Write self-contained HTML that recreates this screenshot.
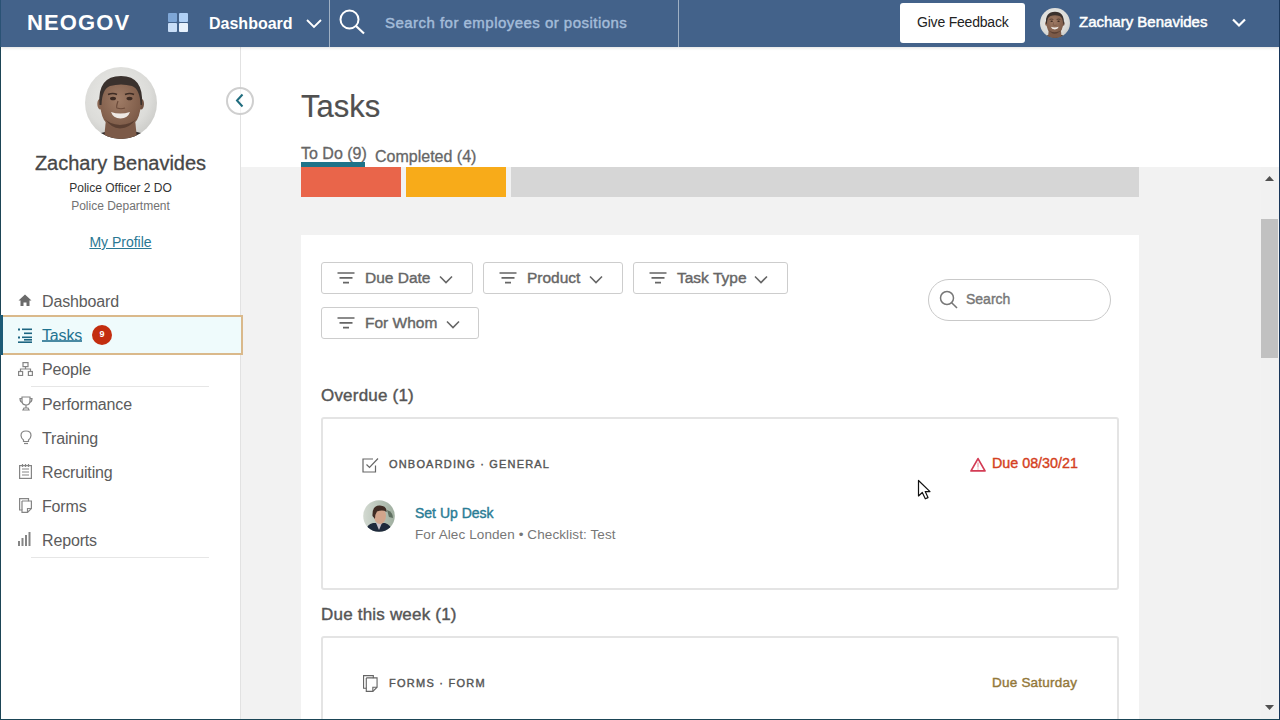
<!DOCTYPE html>
<html><head><meta charset="utf-8">
<style>
*{margin:0;padding:0;box-sizing:border-box}
html,body{width:1280px;height:720px;overflow:hidden;background:#fff;font-family:"Liberation Sans",sans-serif}
.a{position:absolute;white-space:nowrap}
#hdr{position:absolute;z-index:6;left:0;top:0;width:1280px;height:47px;background:#43628a;box-shadow:0 1px 3px rgba(0,0,0,0.12)}
#side{position:absolute;z-index:5;left:0;top:47px;width:241px;height:673px;background:#fff;border-right:1px solid #e2e2e2}
#gray{position:absolute;left:241px;top:167px;width:1039px;height:553px;background:#f2f2f2}
#card{position:absolute;left:301px;top:235px;width:838px;height:485px;background:#fff}
.nav{position:absolute;left:42px;font-size:16px;color:#5c5c5c;letter-spacing:-0.15px}
.ico{position:absolute}
.fbtn{position:absolute;height:32px;border:1px solid #cdcdcd;border-radius:3px;background:#fff}
.fbtn span{position:absolute;top:6px;font-size:15.5px;color:#666;-webkit-text-stroke:0.4px #666}
.sb{-webkit-text-stroke-width:0.4px}
.tcard{position:absolute;left:321px;width:798px;border:2px solid #e4e4e4;border-radius:3px;background:#fff}
</style></head><body>
<svg width="0" height="0" style="position:absolute">
<defs>
<radialGradient id="gbg" cx="45%" cy="40%" r="65%"><stop offset="0" stop-color="#ecece9"/><stop offset="0.7" stop-color="#dcdcd9"/><stop offset="1" stop-color="#c9c9c6"/></radialGradient>
<radialGradient id="gsk" cx="45%" cy="40%" r="60%"><stop offset="0" stop-color="#a07c66"/><stop offset="1" stop-color="#7c5a47"/></radialGradient>
<symbol id="zach" viewBox="0 0 72 72">
  <clipPath id="cav"><circle cx="36" cy="36" r="36"/></clipPath>
  <g clip-path="url(#cav)">
    <rect width="72" height="72" fill="url(#gbg)"/>
    <path d="M10 72 L16 66 L24 64 L48 64 L56 66 L62 72 Z" fill="#2e2a2a"/>
    <path d="M19 72 L21 52 L50 52 L52 72 Z" fill="#7c5a48"/>
    <ellipse cx="15.5" cy="37" rx="3.2" ry="5.5" fill="#8a6652"/>
    <ellipse cx="56" cy="37" rx="3" ry="5.5" fill="#6f5040"/>
    <path d="M15 32 Q15 13 36 13 Q57 13 56 32 Q56 46 52 53 Q45 62 35 62 Q25 62 19 53 Q15 46 15 32 Z" fill="url(#gsk)"/>
    <path d="M20 52 Q26 61 35 61.5 Q45 61 51 52 Q47 57 35 58 Q24 57 20 52 Z" fill="#5a3f32"/>
    <path d="M14.5 38 Q12 9 36 9 Q59 9 57 38 L55.5 38 Q55 22 47 19 Q36 16 25 19 Q17 22 16.5 38 Z" fill="#3a312d"/>
    <path d="M23 27.5 Q28 25.5 32 27.5 M40 27.5 Q45 25.5 49 27.5" stroke="#3e2c24" stroke-width="1.6" fill="none"/>
    <ellipse cx="28" cy="31.5" rx="3" ry="1.8" fill="#3c2a22"/>
    <ellipse cx="44.5" cy="31.5" rx="3" ry="1.8" fill="#3c2a22"/>
    <path d="M33 34 Q31 40 32 41 Q36 42.5 40 41" stroke="#6b4a3a" stroke-width="1.2" fill="none"/>
    <path d="M26 45 Q35 48 45 45 Q43 51 35.5 51.5 Q28 51 26 45 Z" fill="#efe9e4"/>
  </g>
</symbol>
</defs></svg>
<div id="hdr">
  <div class="a" style="left:27px;top:10px;font-size:22px;font-weight:bold;color:#fff;letter-spacing:1.1px">NEOGOV</div>
  <div class="ico" style="left:168px;top:13px;width:9px;height:9px;background:#7ea6d6;border-radius:1px"></div>
  <div class="ico" style="left:179px;top:13px;width:9px;height:9px;background:#afd0f6;border-radius:1px"></div>
  <div class="ico" style="left:168px;top:23px;width:9px;height:9px;background:#c9def7;border-radius:1px"></div>
  <div class="ico" style="left:179px;top:23px;width:9px;height:9px;background:#e8f2fd;border-radius:1px"></div>
  <div class="a" style="left:209px;top:15px;font-size:16px;font-weight:bold;color:#fff">Dashboard</div>
  <svg class="ico" style="left:305px;top:17px" width="18" height="14" viewBox="0 0 18 14"><path d="M2 3 L9 10 L16 3" stroke="#fff" stroke-width="1.8" fill="none"/></svg>
  <div class="ico" style="left:329px;top:0;width:1px;height:47px;background:#9fb0c4"></div>
  <svg class="ico" style="left:338px;top:8px" width="28" height="28" viewBox="0 0 28 28"><circle cx="11.5" cy="11.5" r="9" stroke="#fff" stroke-width="2" fill="none"/><path d="M18 18 L26 25.5" stroke="#fff" stroke-width="2.2"/></svg>
  <div class="a" style="left:385px;top:14px;font-size:15px;letter-spacing:0.47px;color:#a3bcd9;-webkit-text-stroke:0.45px #a3bcd9">Search for employees or positions</div>
  <div class="ico" style="left:678px;top:0;width:1px;height:47px;background:#9fb0c4"></div>
  <div class="ico" style="left:900px;top:3px;width:125px;height:40px;background:#fff;border-radius:3px"></div>
  <div class="a" style="left:917px;top:14px;font-size:14px;color:#222;letter-spacing:-0.2px">Give Feedback</div>
  <svg class="ico" style="left:1040px;top:8px" width="30" height="30" viewBox="0 0 72 72"><use href="#zach"/></svg>
  <div class="a" style="left:1079px;top:13px;font-size:15px;color:#fff;-webkit-text-stroke:0.5px #fff">Zachary Benavides</div>
  <svg class="ico" style="left:1231px;top:17px" width="16" height="12" viewBox="0 0 16 12"><path d="M2 2.5 L8 8.5 L14 2.5" stroke="#fff" stroke-width="2.2" fill="none"/></svg>
</div>

<div id="side">
  <div class="ico" style="left:0;top:0;width:1px;height:673px;background:#1d4556"></div>
  <svg class="ico" style="left:85px;top:20px" width="72" height="72" viewBox="0 0 72 72"><use href="#zach"/></svg>
  <div class="a" style="left:0;width:241px;text-align:center;top:105px;font-size:20px;color:#474747;-webkit-text-stroke:0.3px #474747">Zachary Benavides</div>
  <div class="a" style="left:0;width:241px;text-align:center;top:134px;font-size:12px;color:#333">Police Officer 2 DO</div>
  <div class="a" style="left:0;width:241px;text-align:center;top:152px;font-size:12px;color:#727272">Police Department</div>
  <div class="a" style="left:0;width:241px;text-align:center;top:187px;font-size:14px;color:#2a7893;text-decoration:underline">My Profile</div>
  <div class="ico" style="left:226px;top:40px;width:28px;height:28px;border-radius:50%;border:2px solid #cfcfcf;background:rgba(255,255,255,0.6)"></div>
  <svg class="ico" style="left:226px;top:40px" width="28" height="28" viewBox="0 0 28 28"><path d="M16.5 7.5 L11 13.5 L16.5 19.5" stroke="#1f6c7e" stroke-width="2" fill="none"/></svg>

  <svg class="ico" style="left:18px;top:247px" width="14" height="13" viewBox="0 0 14 13"><path d="M7 0.5 L13.5 6.5 L11.5 6.5 L11.5 12 L8.5 12 L8.5 8.5 L5.5 8.5 L5.5 12 L2.5 12 L2.5 6.5 L0.5 6.5 Z" fill="#6a6a6a"/></svg>
  <div class="nav" style="top:246px">Dashboard</div>

  <div class="ico" style="left:1px;top:268px;width:242px;height:40px;background:#effbfc;border:2px solid #dab98b"></div>
  <div class="ico" style="left:0;top:268px;width:3px;height:40px;background:#1d5b77"></div>
  <svg class="ico" style="left:18px;top:281px" width="15" height="15" viewBox="0 0 15 15"><g fill="#1e6682"><rect x="0" y="0.5" width="2" height="2"/><rect x="4" y="0.5" width="10" height="1.6"/><rect x="6" y="4.5" width="8" height="1.6"/><rect x="0" y="8.5" width="2" height="2"/><rect x="4" y="8.5" width="10" height="1.6"/><rect x="6" y="11" width="8" height="1.6"/><rect x="0" y="13.4" width="14" height="1.6"/></g></svg>
  <div class="nav" style="top:280px;color:#1f7391">Tasks</div><div class="ico" style="left:42px;top:293px;width:40px;height:2px;background:#4a8aa3"></div>
  <div class="ico" style="left:92px;top:278px;width:20px;height:20px;border-radius:50%;background:#c32d0f;color:#fff;font-size:9px;font-weight:bold;text-align:center;line-height:19px">9</div>

  <svg class="ico" style="left:18px;top:315px" width="15" height="14" viewBox="0 0 15 14"><g stroke="#858585" stroke-width="1.2" fill="none"><rect x="5" y="0.6" width="5" height="4"/><path d="M7.5 4.6 V7 M2.5 9.5 V7 H12.5 V9.5"/><rect x="0.6" y="9.5" width="4" height="4"/><rect x="10.4" y="9.5" width="4" height="4"/></g></svg>
  <div class="nav" style="top:314px">People</div>
  <div class="ico" style="left:31px;top:339px;width:178px;height:1px;background:#e6e6e6"></div>

  <svg class="ico" style="left:19px;top:349px" width="14" height="15" viewBox="0 0 14 15"><g stroke="#858585" stroke-width="1.2" fill="none"><path d="M3 1 H11 V5 Q11 9 7 9 Q3 9 3 5 Z"/><path d="M3 2.5 H1 Q1 6 3.5 6.5 M11 2.5 H13 Q13 6 10.5 6.5"/><path d="M7 9 V12 M4 14 H10 L9 12 H5 Z"/></g></svg>
  <div class="nav" style="top:349px">Performance</div>

  <svg class="ico" style="left:20px;top:383px" width="12" height="15" viewBox="0 0 12 15"><g stroke="#858585" stroke-width="1.2" fill="none"><path d="M6 1 Q11 1 11 5.5 Q11 8 8.5 10 V11.5 H3.5 V10 Q1 8 1 5.5 Q1 1 6 1 Z"/><path d="M4 13.5 H8"/></g></svg>
  <div class="nav" style="top:383px">Training</div>

  <svg class="ico" style="left:19px;top:417px" width="13" height="15" viewBox="0 0 13 15"><g stroke="#858585" stroke-width="1.2" fill="none"><rect x="0.6" y="1.6" width="11.8" height="12.8"/><path d="M3 5 H10 M3 8 H10 M3 11 H10 M3.5 0 V3 M6.5 0 V3 M9.5 0 V3"/></g></svg>
  <div class="nav" style="top:417px">Recruiting</div>

  <svg class="ico" style="left:19px;top:451px" width="13" height="15" viewBox="0 0 13 15"><g stroke="#858585" stroke-width="1.2" fill="none"><path d="M0.6 0.6 H9.5 V3 H12.4 V10.5 L8.5 14.4 H3 V12 H0.6 Z"/><path d="M3 3 H9.5 M3 3 V12 M8.5 14.4 V10.5 H12.4"/></g></svg>
  <div class="nav" style="top:451px">Forms</div>

  <svg class="ico" style="left:18px;top:485px" width="14" height="14" viewBox="0 0 14 14"><g fill="#858585"><rect x="0" y="9" width="2" height="5"/><rect x="3.5" y="6" width="2" height="8"/><rect x="7" y="3" width="2" height="11"/><rect x="10.5" y="0" width="2" height="14"/></g></svg>
  <div class="nav" style="top:485px">Reports</div>
  <div class="ico" style="left:31px;top:510px;width:178px;height:1px;background:#e6e6e6"></div>
</div>

<div class="a" style="left:301px;top:89px;font-size:31px;color:#505050;-webkit-text-stroke:0.2px #505050">Tasks</div>
<div class="a" style="left:301px;top:145px;font-size:16px;color:#666;-webkit-text-stroke:0.3px #666">To Do (9)</div>
<div class="a" style="left:375px;top:148px;font-size:16px;color:#666;-webkit-text-stroke:0.3px #666">Completed (4)</div>
<div id="gray"></div>
<div class="ico" style="left:301px;top:162px;width:64px;height:5px;background:#1e7389"></div>
<div class="ico" style="left:301px;top:167px;width:100px;height:30px;background:#e9654a"></div>
<div class="ico" style="left:406px;top:167px;width:100px;height:30px;background:#f8ab19"></div>
<div class="ico" style="left:511px;top:167px;width:628px;height:30px;background:#d6d6d6"></div>
<div id="card"></div>

<div class="fbtn" style="left:321px;top:262px;width:152px"><svg class="ico" style="left:15px;top:9px" width="18" height="13" viewBox="0 0 18 13"><path d="M0.5 1 H17.5 M2.5 5.8 H15.5 M6 10.6 H12" stroke="#666" stroke-width="1.7"/></svg><span style="left:43px">Due Date</span><svg class="ico" style="left:117px;top:12px" width="14" height="9" viewBox="0 0 14 9"><path d="M1 1.5 L7 7.5 L13 1.5" stroke="#666" stroke-width="1.6" fill="none"/></svg></div>
<div class="fbtn" style="left:483px;top:262px;width:140px"><svg class="ico" style="left:15px;top:9px" width="18" height="13" viewBox="0 0 18 13"><path d="M0.5 1 H17.5 M2.5 5.8 H15.5 M6 10.6 H12" stroke="#666" stroke-width="1.7"/></svg><span style="left:43px">Product</span><svg class="ico" style="left:105px;top:12px" width="14" height="9" viewBox="0 0 14 9"><path d="M1 1.5 L7 7.5 L13 1.5" stroke="#666" stroke-width="1.6" fill="none"/></svg></div>
<div class="fbtn" style="left:633px;top:262px;width:155px"><svg class="ico" style="left:15px;top:9px" width="18" height="13" viewBox="0 0 18 13"><path d="M0.5 1 H17.5 M2.5 5.8 H15.5 M6 10.6 H12" stroke="#666" stroke-width="1.7"/></svg><span style="left:43px">Task Type</span><svg class="ico" style="left:120px;top:12px" width="14" height="9" viewBox="0 0 14 9"><path d="M1 1.5 L7 7.5 L13 1.5" stroke="#666" stroke-width="1.6" fill="none"/></svg></div>
<div class="fbtn" style="left:321px;top:307px;width:158px"><svg class="ico" style="left:15px;top:9px" width="18" height="13" viewBox="0 0 18 13"><path d="M0.5 1 H17.5 M2.5 5.8 H15.5 M6 10.6 H12" stroke="#666" stroke-width="1.7"/></svg><span style="left:43px">For Whom</span><svg class="ico" style="left:124px;top:12px" width="14" height="9" viewBox="0 0 14 9"><path d="M1 1.5 L7 7.5 L13 1.5" stroke="#666" stroke-width="1.6" fill="none"/></svg></div>

<div class="ico" style="left:928px;top:279px;width:183px;height:42px;border:1px solid #c9c9c9;border-radius:21px;background:#fff"></div>
<svg class="ico" style="left:939px;top:290px" width="20" height="20" viewBox="0 0 20 20"><circle cx="8" cy="8" r="6.5" stroke="#777" stroke-width="1.5" fill="none"/><path d="M12.7 12.7 L18 18" stroke="#777" stroke-width="1.6"/></svg>
<div class="a sb" style="left:966px;top:291px;font-size:14px;color:#777">Search</div>

<div class="a sb" style="left:321px;top:386px;font-size:17px;color:#555;letter-spacing:0.2px">Overdue (1)</div>
<div class="tcard" style="top:417px;height:173px"></div>
<svg class="ico" style="left:362px;top:457px" width="17" height="16" viewBox="0 0 17 16"><path d="M13.5 8.5 V15 H1 V2 H11" stroke="#666" stroke-width="1.2" fill="none"/><path d="M4.5 7.5 L7.5 10.5 L16 1.5" stroke="#666" stroke-width="1.2" fill="none"/></svg>
<div class="a sb" style="left:389px;top:458px;font-size:11px;color:#555;letter-spacing:1.18px">ONBOARDING · GENERAL</div>
<svg class="ico" style="left:970px;top:457px" width="16" height="15" viewBox="0 0 16 15"><path d="M8 1.6 L15 13.9 H1 Z" stroke="#d33c55" stroke-width="1.7" fill="none" stroke-linejoin="round"/><path d="M8 5.5 V10.5" stroke="#e6a3ae" stroke-width="1.3"/><circle cx="8" cy="12" r="0.7" fill="#e6a3ae"/></svg>
<div class="a sb" style="left:992px;top:455px;font-size:14.3px;color:#d43f22">Due 08/30/21</div>
<svg class="ico" style="left:363px;top:500px" width="32" height="32" viewBox="0 0 32 32">
  <defs><clipPath id="cav2"><circle cx="16" cy="16" r="15.8"/></clipPath>
  <linearGradient id="alb" x1="0" y1="0" x2="1" y2="0"><stop offset="0" stop-color="#d4dad2"/><stop offset="0.5" stop-color="#b9c5b9"/><stop offset="1" stop-color="#9fae9f"/></linearGradient></defs>
  <g clip-path="url(#cav2)"><rect width="32" height="32" fill="url(#alb)"/>
  <path d="M24 10 Q30 12 30 18 L26 17 Z" fill="#5f6f60"/>
  <path d="M2 32 Q4 24 10 23 L22 23 Q28 25 30 32 Z" fill="#1f2a3c"/>
  <path d="M13 23 L16 30 L19 23 Z" fill="#c8c0c8"/>
  <ellipse cx="17" cy="16" rx="6" ry="8" fill="#d2a58c"/>
  <path d="M9.5 16 Q9 5 17 5.5 Q24 6 23.5 12 Q20 9.5 14 11.5 Q12 14 12 19 Z" fill="#3f2c24"/>
  </g>
</svg>
<div class="a sb" style="left:415px;top:505px;font-size:14px;color:#2a7c95">Set Up Desk</div>
<div class="a" style="left:415px;top:527px;font-size:13.5px;color:#777;letter-spacing:0.1px">For Alec Londen • Checklist: Test</div>

<div class="a sb" style="left:321px;top:605px;font-size:17px;color:#555;letter-spacing:0.2px">Due this week (1)</div>
<div class="tcard" style="top:636px;height:120px"></div>
<svg class="ico" style="left:363px;top:675px" width="15" height="17" viewBox="0 0 16 18"><g stroke="#666" stroke-width="1.2" fill="none"><path d="M0.6 0.6 H11 V3 H15 V13 L10.5 17.4 H3.5 V14 H0.6 Z"/><path d="M3.5 3 H11 M3.5 3 V14 M10.5 17.4 V13 H15"/></g></svg>
<div class="a sb" style="left:389px;top:677px;font-size:11px;color:#555;letter-spacing:1.25px">FORMS · FORM</div>
<div class="a sb" style="left:992px;top:675px;font-size:13.5px;letter-spacing:0.22px;color:#93783a">Due Saturday</div>

<div class="ico" style="left:1261px;top:167px;width:17px;height:553px;background:#f1f1f1"></div>
<div class="ico" style="left:1261px;top:219px;width:17px;height:139px;background:#c1c1c1"></div>
<svg class="ico" style="left:1261px;top:172px" width="17" height="12" viewBox="0 0 17 12"><path d="M4 9 L8.5 4 L13 9 Z" fill="#505050"/></svg>
<svg class="ico" style="left:1261px;top:702px" width="17" height="12" viewBox="0 0 17 12"><path d="M4 3 L8.5 8 L13 3 Z" fill="#505050"/></svg>
<div class="ico" style="z-index:10;left:1279px;top:0;width:1px;height:720px;background:#18365a"></div>
<div class="ico" style="z-index:10;left:0;top:719px;width:1280px;height:1px;background:#1b4556"></div>
<div class="ico" style="z-index:10;left:0;top:0;width:1px;height:47px;background:#2a5275"></div>
<svg class="ico" style="left:917px;top:479px" width="16" height="22" viewBox="0 0 16 22"><path d="M1.5 1.5 L1.5 17 L5.3 13.5 L8.3 19.8 L11 18.6 L8.2 12.6 L13 12.6 Z" fill="#fff" stroke="#111" stroke-width="1.2" stroke-linejoin="round"/></svg>

</body></html>
